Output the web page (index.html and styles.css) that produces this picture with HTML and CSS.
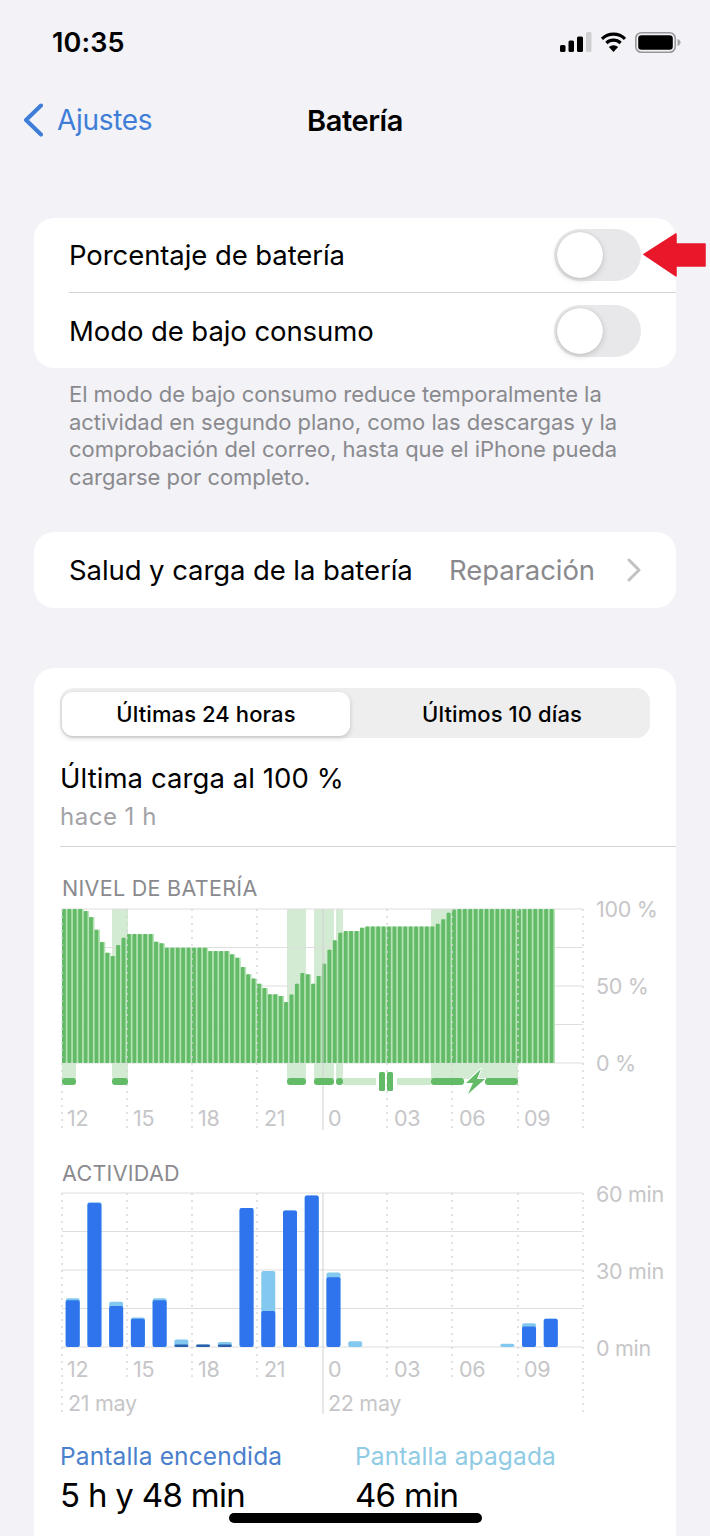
FILE: index.html
```html
<!DOCTYPE html>
<html lang="es">
<head>
  <meta charset="UTF-8">
  <meta name="viewport" content="width=device-width, initial-scale=1.0">
  <title>Batería</title>
  <link rel="stylesheet" href="styles.css">
</head>
<body>

  <!-- barra de estado -->
  <div class="status">
    <span class="clock">10:35</span>
    <div class="status-icons">
      <svg width="32" height="20" viewBox="0 0 32 20">
        <rect x="0" y="13" width="5.5" height="7" rx="1.5" fill="#000"/>
        <rect x="8.5" y="8.5" width="5.5" height="11.5" rx="1.5" fill="#000"/>
        <rect x="17" y="4.5" width="6" height="15.5" rx="1.5" fill="#000"/>
        <rect x="26" y="0" width="5.5" height="20" rx="1.5" fill="#cfcfd2"/>
      </svg>
      <svg width="27" height="20" viewBox="0 0 27 20">
        <path d="M2 6.8 A16.5 16.5 0 0 1 25 6.8" fill="none" stroke="#000" stroke-width="3.2"/>
        <path d="M6.4 11 A10.3 10.3 0 0 1 20.6 11" fill="none" stroke="#000" stroke-width="3.2"/>
        <path d="M13.5 20 L8.9 15 A6.6 6.6 0 0 1 18.1 15 Z" fill="#000"/>
      </svg>
      <svg width="46" height="21" viewBox="0 0 46 21">
        <rect x="0.8" y="0.8" width="39.4" height="19.4" rx="5.5" fill="none" stroke="#98989b" stroke-width="1.6"/>
        <rect x="3.2" y="3.2" width="34.6" height="14.6" rx="3.2" fill="#000"/>
        <path d="M42.5 7 C44.5 7.6 45.5 9 45.5 10.5 C45.5 12 44.5 13.4 42.5 14 Z" fill="#a5a5a8"/>
      </svg>
    </div>
  </div>

  <!-- navegacion -->
  <div class="nav">
    <div class="nav-back">
      <svg width="22" height="34" viewBox="0 0 22 34">
        <path d="M19 2.5 L4 17 L19 31.5" fill="none" stroke="#3f7ed8" stroke-width="4" stroke-linecap="round" stroke-linejoin="round"/>
      </svg>
      <span>Ajustes</span>
    </div>
    <div class="nav-title">Batería</div>
  </div>

  <div class="card">
    <div class="row row-line">
      <span>Porcentaje de batería</span>
      <div class="toggle"><div class="knob"></div></div>
    </div>
    <div class="row">
      <span>Modo de bajo consumo</span>
      <div class="toggle"><div class="knob"></div></div>
    </div>
  </div>

  <p class="note">El modo de bajo consumo reduce temporalmente la actividad en segundo plano, como las descargas y la comprobación del correo, hasta que el iPhone pueda cargarse por completo.</p>

  <div class="card card-health">
    <div class="row">
      <span>Salud y carga de la batería</span>
      <div class="row-value">
        <span>Reparación</span>
        <svg width="14" height="24" viewBox="0 0 14 24">
          <path d="M2 2 L12 12 L2 22" fill="none" stroke="#c2c2c5" stroke-width="3" stroke-linecap="round" stroke-linejoin="round"/>
        </svg>
      </div>
    </div>
  </div>

  <div class="card card-usage">
    <div class="segmented">
      <div class="segment segment-on">Últimas 24 horas</div>
      <div class="segment">Últimos 10 días</div>
    </div>

    <div class="charge-title">Última carga al 100 %</div>
    <div class="charge-sub">hace 1 h</div>
    <div class="divider"></div>

    <div class="chart-label">NIVEL DE BATERÍA</div>
    <svg id="levelChart" class="chart" width="616" height="269" viewBox="60 891 616 269"></svg>

    <div class="chart-label chart-label-next">ACTIVIDAD</div>
    <svg id="activityChart" class="chart" width="616" height="248" viewBox="60 1176 616 248"></svg>

    <div class="legend">
      <div>
        <div class="legend-on">Pantalla encendida</div>
        <div class="legend-value">5 h y 48 min</div>
      </div>
      <div>
        <div class="legend-off">Pantalla apagada</div>
        <div class="legend-value">46 min</div>
      </div>
    </div>
  </div>

  <!-- flecha roja encima del interruptor -->
  <svg class="arrow" width="63" height="44" viewBox="0 0 63 44">
    <path d="M1 21.5 L33 1 L33 11 L62 11 L62 33 L33 33 L33 43 Z" fill="#e8172a" stroke="#e8172a" stroke-width="1.5" stroke-linejoin="round"/>
  </svg>

  <div class="home-bar"></div>

  <script src="script.js"></script>
</body>
</html>
```

FILE: styles.css
```css
* { box-sizing: border-box; }
body {
  font-family: Inter, 'Noto Sans', sans-serif;
  background: #f2f2f7;
  color: #000;
  margin: 0;
  width: 710px;
  height: 1536px;
  overflow: hidden;
  position: relative;
}

.status {
  height: 84px;
  padding: 0 29px 0 52px;
  display: flex;
  align-items: center;
  justify-content: space-between;
}
.clock { font-size: 27px; font-weight: 600; letter-spacing: 0.1px; }
.status-icons { display: flex; align-items: center; gap: 8px; }

.nav {
  height: 72px;
  position: relative;
  display: flex;
  align-items: center;
  justify-content: center;
}
.nav-back {
  position: absolute;
  left: 22px;
  top: 19px;
  display: flex;
  align-items: center;
  gap: 13px;
  color: #3f7ed8;
  font-size: 28px;
  letter-spacing: -0.3px;
}
.nav-title { font-size: 29px; font-weight: 600; letter-spacing: -0.4px; }

.card {
  background: #fff;
  border-radius: 20px;
  margin: 62px 34px 0;
}
.row {
  height: 75px;
  margin-left: 35px;
  padding-right: 35px;
  display: flex;
  align-items: center;
  justify-content: space-between;
  font-size: 27.5px;
  letter-spacing: -0.08px;
}
.row-line { border-bottom: 1px solid #d4d4d6; }
.toggle {
  width: 87px;
  height: 52px;
  padding: 3px;
  border-radius: 26px;
  background: #e8e8ea;
}
.knob {
  width: 46px;
  height: 46px;
  border-radius: 50%;
  background: #fff;
  box-shadow: 0 2px 6px rgba(0,0,0,0.16), 0 0 1px rgba(0,0,0,0.22);
}

.note {
  margin: 13px 0 0;
  padding: 0 60px 0 69px;
  font-size: 22px;
  line-height: 27.5px;
  color: #8a8a8e;
  letter-spacing: -0.04px;
}

.card-health { margin-top: 41px; }
.card-health .row { height: 76px; }
.row-value {
  display: flex;
  align-items: center;
  gap: 32px;
  color: #8a8a8e;
}

.card-usage {
  margin-top: 60px;
  height: 900px;
  padding: 20px 26px;
}
.segmented {
  height: 50px;
  padding: 4px 0 2px 2px;
  display: flex;
  border-radius: 14px;
  background: #eeeeef;
  font-size: 22px;
  font-weight: 500;
  letter-spacing: 0.1px;
}
.segment {
  flex: 1;
  display: flex;
  align-items: center;
  justify-content: center;
  padding-left: 4px;
}
.segment-on {
  flex: 0 0 288px;
  padding-left: 0;
  background: #fff;
  border-radius: 11px;
  box-shadow: 0 2px 5px rgba(0,0,0,0.18);
}
.charge-title {
  margin-top: 22px;
  font-size: 27.5px;
  line-height: 36px;
  letter-spacing: 0.07px;
}
.charge-sub {
  margin-top: 4px;
  font-size: 24px;
  line-height: 34px;
  color: #a3a3a7;
  letter-spacing: 0.5px;
}
.divider {
  height: 1px;
  margin: 12px -26px 0 0;
  background: #d4d4d6;
}
.chart-label {
  margin-top: 28px;
  padding-left: 2px;
  height: 26px;
  line-height: 26px;
  font-size: 21.5px;
  color: #8a8a8e;
  letter-spacing: 0.3px;
}
.chart-label-next { margin-top: 0; }
.chart { display: block; margin-top: -10px; }

.tick {
  font-family: Inter, 'Noto Sans', sans-serif;
  font-size: 21.5px;
  fill: #c6c6c8;
  letter-spacing: -0.3px;
}

.legend {
  margin-top: 17px;
  display: grid;
  grid-template-columns: 295px auto;
}
.legend-on, .legend-off { font-size: 24.5px; line-height: 30px; letter-spacing: 0.15px; }
.legend-on { color: #4a80cc; }
.legend-off { color: #8fcbe4; }
.legend-value {
  margin-top: 4px;
  font-size: 33px;
  line-height: 40px;
  letter-spacing: -0.7px;
}

.arrow { position: absolute; left: 643px; top: 233px; }
.home-bar {
  position: absolute;
  left: 229px;
  top: 1513px;
  width: 253px;
  height: 10px;
  border-radius: 5px;
  background: #000;
}
```

FILE: script.js
```js
// columnas de 3 h
const VLINES = [62, 127, 192, 257, 387, 452, 518, 583];
const MIDNIGHT = 323;
const SVG_NS = 'http://www.w3.org/2000/svg';

function add(svg, tag, attrs, text) {
  const el = document.createElementNS(SVG_NS, tag);
  for (const k in attrs) el.setAttribute(k, attrs[k]);
  if (text) el.textContent = text;
  svg.appendChild(el);
  return el;
}

function rect(svg, x, y, w, h, fill, rx) {
  return add(svg, 'rect', { x, y, width: w, height: h, fill, rx: rx || 0 });
}

function drawGrid(svg, top, bottom) {
  const step = (bottom - top) / 4;
  for (let i = 0; i <= 4; i++) {
    add(svg, 'line', { x1: 62, x2: 583, y1: top + step * i, y2: top + step * i, stroke: '#dedee0', 'stroke-width': 1.2 });
  }
}

function drawVLines(svg, top, bottom, dateBottom) {
  VLINES.forEach(x => {
    const end = (x === 62 || x === 583) ? dateBottom : bottom;
    add(svg, 'line', { x1: x, x2: x, y1: top, y2: end, stroke: '#d6d6d8', 'stroke-width': 1.4, 'stroke-dasharray': '2 5' });
  });
  add(svg, 'line', { x1: MIDNIGHT, x2: MIDNIGHT, y1: top, y2: dateBottom + 2, stroke: '#d0d0d3', 'stroke-width': 1 });
}

function drawHours(svg, y) {
  [['12', 67], ['15', 133], ['18', 198], ['21', 264], ['0', 328], ['03', 394], ['06', 459], ['09', 524]].forEach(([t, x]) => {
    add(svg, 'text', { x, y, class: 'tick' }, t);
  });
}

function drawLevel() {
  const svg = document.getElementById('levelChart');
  const top = 909, bottom = 1063;

  // tramos de carga
  [[62, 14], [112, 16], [287, 19], [314, 20], [336, 7], [431, 87]].forEach(([x, w]) => {
    rect(svg, x, top, w, 170, '#d2ebd2');
  });
  drawGrid(svg, top, bottom);

  const levels = [
    100, 100, 100, 100, 98.7, 94.8, 86.6, 78.6, 71.6, 69.5, 76.6, 81.4, 83.8, 83.8, 83.8, 83.8, 83.8, 78.8, 77.7,
    74.9, 74.9, 74.9, 74.9, 74.9, 74.9, 74.9, 74.9, 72.7, 72.7, 72.7, 72.7, 70.6, 68.4, 62.3, 57.6, 54.8, 51.5,
    48.7, 44.6, 44.6, 43.5, 39.6, 44.4, 51.5, 58.4, 57.6, 51.5, 56.5, 64.5, 73.6, 79.7, 84.6, 85.7, 85.7, 85.7,
    87.9, 88.7, 88.7, 88.7, 88.7, 88.7, 88.7, 88.7, 88.7, 88.7, 88.7, 88.7, 88.7, 88.7, 90.5, 93.3, 97.6, 99.6,
    100, 100, 100, 100, 100, 100, 100, 100, 100, 100, 100, 100, 100, 100, 100, 100, 100, 100
  ];
  const pitch = 493 / levels.length;
  levels.forEach((v, i) => {
    const h = v / 100 * (bottom - top);
    rect(svg, 62 + pitch * i, bottom - h, pitch, h, '#b6e4b7');
    rect(svg, 62 + pitch * i, bottom - h, pitch - 1.6, h, '#63bb68', 1);
  });
  drawVLines(svg, top, 1128, 1128);

  // franja inferior
  rect(svg, 343, 1078, 33, 7, '#cdeacd');
  rect(svg, 397, 1078, 34, 7, '#cdeacd');
  [[62, 14], [112, 16], [287, 19], [314, 20], [336, 7], [431, 33], [485, 33]].forEach(([x, w]) => {
    rect(svg, x, 1078, w, 7, '#63bb68', 3);
  });
  rect(svg, 379, 1072, 6, 19, '#63bb68', 1.5);
  rect(svg, 387, 1072, 6, 19, '#63bb68', 1.5);
  add(svg, 'path', {
    d: 'M481 1069 L466 1083 L473 1083 L468 1094 L485 1079 L477 1079 Z',
    fill: '#63bb68', stroke: '#fff', 'stroke-width': 2, 'paint-order': 'stroke', 'stroke-linejoin': 'round'
  });

  [['100 %', 909], ['50 %', 986], ['0 %', 1063]].forEach(([t, y]) => {
    add(svg, 'text', { x: 596, y: y + 8, class: 'tick' }, t);
  });
  drawHours(svg, 1126);
}

function drawActivity() {
  const svg = document.getElementById('activityChart');
  const top = 1193, bottom = 1347;
  drawGrid(svg, top, bottom);
  drawVLines(svg, top, 1378, 1412);

  // [pantalla apagada + encendida, encendida] en min
  const bars = [
    [19, 18.2], [56.4, 56.1], [17.6, 16], [11.5, 11], [19, 18.2], [2.9, 1], [1, 1], [1.9, 1],
    [54.2, 54.2], [29.6, 14], [53.2, 53.2], [59, 59], [29, 27.2], [2.2, 0], 0, 0, 0, 0, 0, 0,
    [1.3, 0], [9.3, 8], [11, 11]
  ];
  const unit = (bottom - top) / 60;
  bars.forEach((b, i) => {
    if (!b) return;
    const x = 65.7 + 21.73 * i;
    rect(svg, x, bottom - b[0] * unit, 14, b[0] * unit, '#82c8ef', 2);
    if (b[1]) rect(svg, x, bottom - b[1] * unit, 14, b[1] * unit, i > 4 && i < 8 ? '#2a5fae' : '#2f74ec', 2);
  });

  [['60 min', 1194], ['30 min', 1271], ['0 min', 1348]].forEach(([t, y]) => {
    add(svg, 'text', { x: 596, y: y + 8, class: 'tick' }, t);
  });
  drawHours(svg, 1377);
  add(svg, 'text', { x: 68, y: 1411, class: 'tick' }, '21 may');
  add(svg, 'text', { x: 328, y: 1411, class: 'tick' }, '22 may');
}

drawLevel();
drawActivity();
```
